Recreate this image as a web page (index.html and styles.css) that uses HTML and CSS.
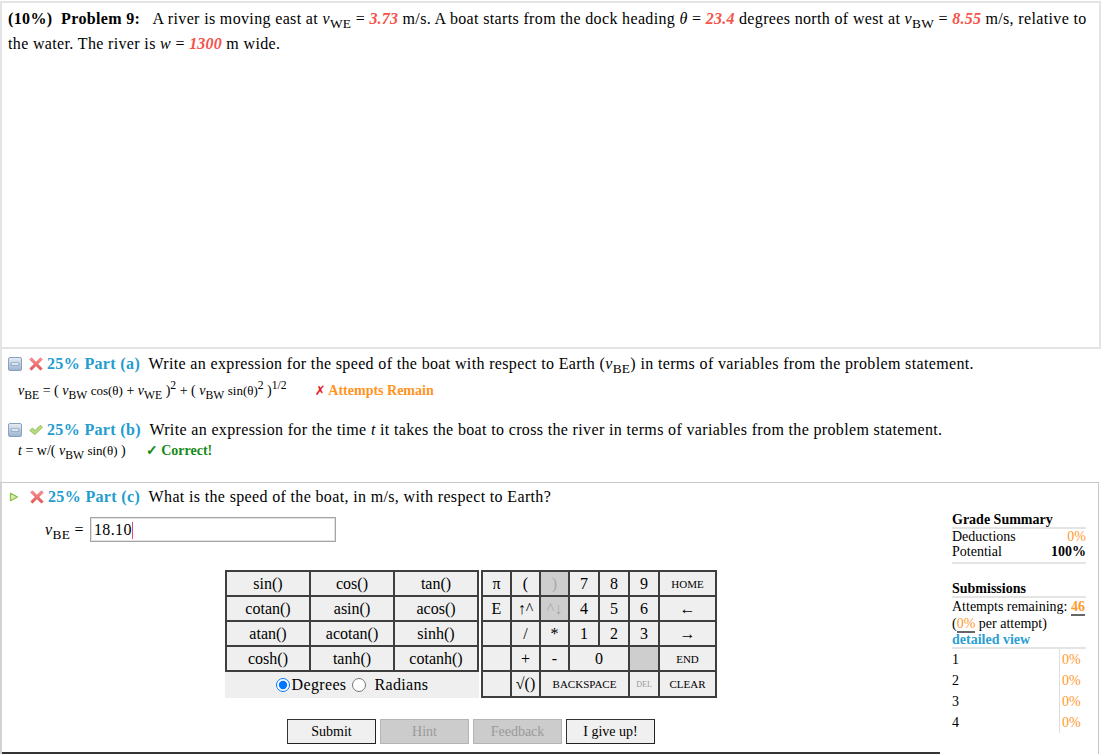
FILE: index.html
```html
<!DOCTYPE html>
<html>
<head>
<meta charset="utf-8">
<link rel="stylesheet" href="styles.css">
</head>
<body>
<div class="page">
  <div class="problem">
    <p class="ptext"><b>(10%)&nbsp; Problem 9:</b>&nbsp;&nbsp; A river is moving east at <i>v</i><sub>WE</sub> = <span class="num">3.73</span> m/s. A boat starts from the dock heading <i>θ</i> = <span class="num">23.4</span> degrees north of west at <i>v</i><sub>BW</sub> = <span class="num">8.55</span> m/s, relative to<br>the water. The river is <i>w</i> = <span class="num">1300</span> m wide.</p>
  </div>

  <div class="part part-a">
    <div class="phead"><svg class="ico" viewBox="0 0 14 14"><defs><linearGradient id="gb1" x1="0" y1="0" x2="0" y2="1"><stop offset="0" stop-color="#e6edf6"/><stop offset="1" stop-color="#9cb2ce"/></linearGradient></defs><rect x="0.5" y="0.5" width="13" height="13" rx="1.5" fill="url(#gb1)" stroke="#8aa0bf"/><rect x="3" y="5.9" width="8" height="2.2" fill="#fff" stroke="#5f7ea6" stroke-width="0.6"/></svg><svg class="ico ico2" viewBox="0 0 14 14"><defs><linearGradient id="gr1" x1="0" y1="0" x2="0" y2="1"><stop offset="0" stop-color="#ff9a9a"/><stop offset="1" stop-color="#e65252"/></linearGradient></defs><path d="M2.5 0.8 L7 5.3 L11.5 0.8 L13.2 2.5 L8.7 7 L13.2 11.5 L11.5 13.2 L7 8.7 L2.5 13.2 L0.8 11.5 L5.3 7 L0.8 2.5 Z" fill="url(#gr1)" stroke="#d84c4c" stroke-width="0.6" stroke-linejoin="round"/></svg><span class="plabel">25% Part (a)</span>&nbsp; Write an expression for the speed of the boat with respect to Earth (<i>v</i><sub>BE</sub>) in terms of variables from the problem statement.</div>
    <div class="pexpr"><i>v</i><sub>BE</sub> = ( <i>v</i><sub>BW</sub> <span class="fn">cos(θ)</span> + <i>v</i><sub>WE</sub> )<sup>2</sup> + ( <i>v</i><sub>BW</sub> <span class="fn">sin(θ)</span><sup>2</sup> )<sup>1/2</sup><span class="status warn"><span class="redx">✗</span> Attempts Remain</span></div>
  </div>

  <div class="part part-b">
    <div class="phead"><svg class="ico" viewBox="0 0 14 14"><defs><linearGradient id="gb2" x1="0" y1="0" x2="0" y2="1"><stop offset="0" stop-color="#e6edf6"/><stop offset="1" stop-color="#9cb2ce"/></linearGradient></defs><rect x="0.5" y="0.5" width="13" height="13" rx="1.5" fill="url(#gb2)" stroke="#8aa0bf"/><rect x="3" y="5.9" width="8" height="2.2" fill="#fff" stroke="#5f7ea6" stroke-width="0.6"/></svg><svg class="ico ico2" viewBox="0 0 14 14"><path d="M0.8 7.6 L3.4 5 L6 7.6 L11.4 2.2 L13.4 4.2 L6 11.6 Z" fill="#b8dc80" stroke="#82b04a" stroke-width="0.8" stroke-linejoin="round"/></svg><span class="plabel">25% Part (b)</span>&nbsp; Write an expression for the time <i>t</i> it takes the boat to cross the river in terms of variables from the problem statement.</div>
    <div class="pexpr pexpr-b"><i>t</i> = w/( <i>v</i><sub>BW</sub> <span class="fn">sin(θ)</span> )<span class="status ok">✓ Correct!</span></div>
  </div>

  <div class="partc">
    <div class="phead phead-c"><svg class="ico" viewBox="0 0 14 14"><path d="M1.5 3.2 L8.5 7 L1.5 10.8 Z" fill="#d9efb4" stroke="#88bf47" stroke-width="1.2" stroke-linejoin="round"/></svg><svg class="ico ico2" viewBox="0 0 14 14"><defs><linearGradient id="gr2" x1="0" y1="0" x2="0" y2="1"><stop offset="0" stop-color="#ff9a9a"/><stop offset="1" stop-color="#e65252"/></linearGradient></defs><path d="M2.5 0.8 L7 5.3 L11.5 0.8 L13.2 2.5 L8.7 7 L13.2 11.5 L11.5 13.2 L7 8.7 L2.5 13.2 L0.8 11.5 L5.3 7 L0.8 2.5 Z" fill="url(#gr2)" stroke="#d84c4c" stroke-width="0.6" stroke-linejoin="round"/></svg><span class="plabel">25% Part (c)</span>&nbsp; What is the speed of the boat, in m/s, with respect to Earth?</div>

    <div class="pc-body">
      <div class="pc-main">
        <div class="answer">
          <span class="alabel"><i>v</i><sub>BE</sub> =</span>
          <div class="field">18.10<span class="caret"></span></div>
        </div>

        <div class="calc">
          <div class="ftable">
            <div class="fgrid">
              <span>sin()</span><span>cos()</span><span>tan()</span>
              <span>cotan()</span><span>asin()</span><span>acos()</span>
              <span>atan()</span><span>acotan()</span><span>sinh()</span>
              <span>cosh()</span><span>tanh()</span><span>cotanh()</span>
            </div>
            <div class="deg"><input type="radio" name="u" checked>Degrees <input type="radio" name="u" class="r2">Radians</div>
          </div>
          <div class="kgrid">
            <span>π</span><span>(</span><span class="off">)</span><span>7</span><span>8</span><span>9</span><span class="sm">HOME</span>
            <span>E</span><span>↑^</span><span class="off">^↓</span><span>4</span><span>5</span><span>6</span><span>←</span>
            <span></span><span>/</span><span>*</span><span>1</span><span>2</span><span>3</span><span>→</span>
            <span></span><span>+</span><span>-</span><span class="span2">0</span><span class="off"></span><span class="sm">END</span>
            <span></span><span>√()</span><span class="span3 sm">BACKSPACE</span><span class="del">DEL</span><span class="sm">CLEAR</span>
          </div>
        </div>

        <div class="btns">
          <span class="btn">Submit</span>
          <span class="btn dis">Hint</span>
          <span class="btn dis">Feedback</span>
          <span class="btn">I give up!</span>
        </div>
      </div>

      <aside class="side">
        <div class="gs-title">Grade Summary</div>
        <div class="gs-block">
          <div class="row"><span>Deductions</span><span class="or">0%</span></div>
          <div class="row"><span>Potential</span><b>100%</b></div>
        </div>
        <div class="sub-title">Submissions</div>
        <div class="att">Attempts remaining: <b class="or u">46</b></div>
        <div class="att">(<span class="or u">0%</span> per attempt)</div>
        <div class="detailed">detailed view</div>
        <div class="hist">
          <span>1</span><span class="or">0%</span>
          <span>2</span><span class="or">0%</span>
          <span>3</span><span class="or">0%</span>
          <span>4</span><span class="or">0%</span>
        </div>
      </aside>
    </div>
  </div>
</div>
</body>
</html>
```

FILE: styles.css
```css
* { box-sizing: border-box; }

body {
  margin: 0;
  font-family: "Liberation Serif", "Times New Roman", serif;
  font-size: 16px;
  color: #000;
  background: #fff;
}

sub, sup { line-height: 0; }

.page {
  width: 1101px;
  margin-top: 1px;
  border-left: 2px solid #e4e4e4;
}

.problem {
  height: 348px;
  border-top: 2px solid #e4e4e4;
  border-bottom: 2px solid #e4e4e4;
  border-right: 2px solid #e4e4e4;
  padding: 3px 1px 0 6px;
}

.ptext {
  margin: 0;
  line-height: 25px;
  letter-spacing: 0.35px;
}

.num {
  color: #f5534a;
  font-style: italic;
  font-weight: bold;
  letter-spacing: 0.2px;
}

.part-a { padding-top: 4px; }
.part-b { padding-top: 19px; }

.phead {
  line-height: 21px;
  padding-left: 6px;
  white-space: nowrap;
  letter-spacing: 0.35px;
}

.ico {
  display: inline-block;
  width: 14px;
  height: 14px;
  vertical-align: -2px;
}

.ico2 { margin-left: 7px; }

.plabel {
  color: #239ccf;
  font-weight: bold;
  margin-left: 4px;
}

.pexpr {
  font-size: 14px;
  line-height: 18px;
  padding-left: 16px;
}

.part-a .pexpr { margin-top: 8px; }
.pexpr-b { margin-top: 2px; }

.fn { font-size: 13px; }

.status {
  font-weight: bold;
}

.warn {
  color: #ff9422;
  margin-left: 28px;
}

.redx { color: #e51c1c; font-family: "DejaVu Sans", sans-serif; font-size: 13px; }

.ok {
  color: #168a16;
  margin-left: 20px;
}

.partc {
  margin-top: 22px;
  margin-left: -2px;
  width: 1099px;
  border-top: 1px solid #c8c8c8;
  border-left: 2px solid #d2d2d2;
  border-right: 1px solid #c8c8c8;
}

.phead-c {
  padding-top: 3px;
  padding-left: 7px;
}

.pc-body {
  display: flex;
}

.pc-main {
  width: 938px;
  padding-left: 43px;
  padding-bottom: 8px;
  border-bottom: 2px solid #333;
}

.answer {
  display: flex;
  align-items: center;
  margin-top: 10px;
}

.alabel {
  width: 45px;
  letter-spacing: 0.35px;
}

.field {
  width: 246px;
  height: 25px;
  border: 1px solid #a4a4a4;
  box-shadow: inset 0 0 0 1px #e2e2e2;
  padding: 0 3px;
  line-height: 23px;
  font-size: 16px;
  letter-spacing: 0.35px;
}

.caret {
  display: inline-block;
  width: 1px;
  height: 17px;
  background: #e04a80;
  vertical-align: -4px;
}

.calc {
  display: flex;
  justify-content: center;
  gap: 2px;
  margin-top: 28px;
  margin-left: -43px;
}

.ftable { width: 254px; }

.fgrid {
  display: grid;
  grid-template-columns: repeat(3, 82px);
  grid-auto-rows: 23px;
  gap: 2px;
  padding: 2px;
  background: #3e3e3e;
}

.fgrid span,
.kgrid span {
  background: #efefef;
  display: flex;
  align-items: center;
  justify-content: center;
  font-size: 16px;
}

.deg {
  height: 26px;
  background: #efefef;
  display: flex;
  align-items: center;
  justify-content: center;
  letter-spacing: 0.35px;
}

.deg input {
  margin: 0 2px 0 0;
  width: 14px;
  height: 14px;
}

.deg .r2 { margin-left: 6px; margin-right: 8px; }

.kgrid {
  display: grid;
  grid-template-columns: 27px 27px 27px 28px 28px 28px 55px;
  grid-template-rows: 23px 23px 23px 23px 24px;
  gap: 2px;
  padding: 2px;
  background: #3e3e3e;
  width: 236px;
}

.kgrid .off {
  background: #cecece;
  color: #a8a8a8;
}

.kgrid .sm { font-size: 11px; }

.kgrid .del {
  font-size: 8px;
  color: #999;
}

.span2 { grid-column: span 2; }
.span3 { grid-column: span 3; }

.btns {
  display: flex;
  justify-content: center;
  gap: 4px;
  margin-top: 21px;
  margin-left: -43px;
}

.btn {
  width: 89px;
  height: 25px;
  display: flex;
  align-items: center;
  justify-content: center;
  font-size: 14px;
  background: #f0f0f0;
  border: 1px solid #333;
  border-right-color: #222;
  border-bottom-color: #222;
}

.btn.dis {
  background: #cccccc;
  color: #9a9a9a;
  border-color: #b4b4b4;
}

.side {
  width: 158px;
  padding: 5px 12px 0 12px;
  font-size: 14px;
  line-height: 15px;
}

.gs-title {
  font-weight: bold;
  border-bottom: 2px solid #e4e4e4;
}

.row {
  display: flex;
  justify-content: space-between;
}

.gs-block {
  padding-bottom: 3px;
  border-bottom: 2px solid #e4e4e4;
}

.sub-title {
  margin-top: 17px;
  font-weight: bold;
  border-bottom: 2px solid #e4e4e4;
}

.att {
  line-height: 17px;
  white-space: nowrap;
}

.or { color: #ff9a2e; }

.u {
  border-bottom: 2px solid #666;
}

.detailed {
  color: #2b9fd4;
  font-weight: bold;
  border-bottom: 2px solid #e4e4e4;
}

.hist {
  display: grid;
  grid-template-columns: 107px 27px;
  grid-auto-rows: 21px;
  line-height: 21px;
}

.hist span:nth-child(even) {
  border-left: 1px solid #dedede;
  padding-left: 2px;
}
```
